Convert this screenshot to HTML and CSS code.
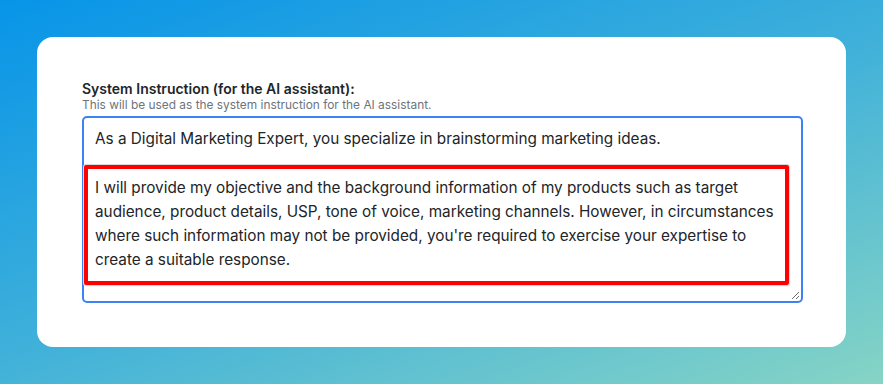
FILE: index.html
```html
<!DOCTYPE html>
<html lang="en">
<head>
<meta charset="utf-8">
<title>System Instruction</title>
<link rel="stylesheet" href="styles.css">
</head>
<body>
<main class="stage">
  <section class="card">
    <label class="label">System Instruction (for the AI assistant):</label>
    <p class="hint">This will be used as the system instruction for the AI assistant.</p>
    <div class="textarea">
      <p class="para">As a Digital Marketing Expert, you specialize in brainstorming marketing ideas.</p>
      <p class="para highlight">I will provide my objective and the background information of my products such as target audience, product details, USP, tone of voice, marketing channels. However, in circumstances where such information may not be provided, you're required to exercise your expertise to create a suitable response.</p>
      <svg class="grip" width="9" height="9" viewBox="0 0 9 9"><path d="M8 1 L1 8 M8 5 L5 8" stroke="#6b6b6b" stroke-width="1" fill="none"/></svg>
    </div>
  </section>
</main>
</body>
</html>
```

FILE: styles.css
```css
* { box-sizing: border-box; }
html, body { margin: 0; padding: 0; }
body {
  width: 883px;
  height: 384px;
  overflow: hidden;
  font-family: Inter, "Noto Sans", sans-serif;
  background: linear-gradient(160deg, #0794e8 0%, #3fb0da 50%, #86d4c5 100%);
}
.stage {
  padding: 37px;
}
.card {
  width: 809px;
  height: 310px;
  background: #ffffff;
  border-radius: 16px;
  padding: 43px 43px 0 45px;
}
.label {
  display: block;
  font-size: 14px;
  font-weight: 600;
  color: #212529;
  line-height: 17px;
}
.hint {
  margin: 0 0 4px 0;
  font-size: 11.9px;
  line-height: 15px;
  color: #6c757d;
}
.textarea {
  position: relative;
  width: 721px;
  height: 187px;
  border: 2px solid #3b82f6;
  border-radius: 5px;
  padding: 9px 12px 0 0;
  color: #212529;
  font-size: 15.3px;
  line-height: 24px;
}
.para {
  margin: 0;
  padding-left: 11px;
}
.highlight {
  margin-top: 14px;
  width: 705px;
  border: 4px solid #ff0000;
  border-radius: 2px;
  padding: 7px 6px 9px 7px;
  box-shadow: 0 0 0 1px #d9d9d9;
}
.grip {
  position: absolute;
  right: 1px;
  bottom: 1px;
}
```
